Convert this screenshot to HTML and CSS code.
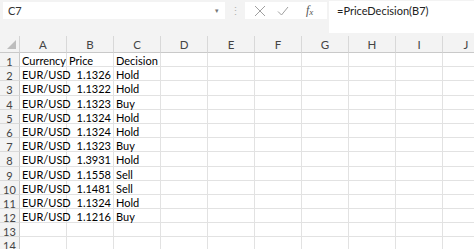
FILE: index.html
```html
<!DOCTYPE html>
<html>
<head>
    <title>Sheet</title>
    <link rel="stylesheet" href="styles.css">
</head>
<body>
    <div class="formula-area">
        <div class="name-box">
            <span class="cell-ref">C7</span>
            <span class="arrow">&#9662;</span>
        </div>
        <div class="grip">&#8942;</div>
        <div class="fn-buttons">
            <svg class="icon" width="12" height="12" viewBox="0 0 12 12"><path d="M1 1L11 11M11 1L1 11" stroke="#a0a0a0" stroke-width="1" fill="none"/></svg>
            <svg class="icon" width="12" height="12" viewBox="0 0 12 12"><path d="M1 6.5L4.5 10L11 2" stroke="#a0a0a0" stroke-width="1" fill="none"/></svg>
            <span class="fx">f<sub>x</sub></span>
        </div>
        <div class="formula-bar">=PriceDecision(B7)</div>
    </div>

    <div class="sheet">
        <div class="corner"><span class="tri"></span></div>
        <div class="col-head">A</div>
        <div class="col-head">B</div>
        <div class="col-head">C</div>
        <div class="col-head">D</div>
        <div class="col-head">E</div>
        <div class="col-head">F</div>
        <div class="col-head">G</div>
        <div class="col-head">H</div>
        <div class="col-head">I</div>
        <div class="col-head">J</div>
    </div>
    <div class="sheet" id="rows"></div>

    <script>
        // 表格数据
        const data = [
            ['Currency', 'Price', 'Decision'],
            ['EUR/USD', '1.1326', 'Hold'],
            ['EUR/USD', '1.1322', 'Hold'],
            ['EUR/USD', '1.1323', 'Buy'],
            ['EUR/USD', '1.1324', 'Hold'],
            ['EUR/USD', '1.1324', 'Hold'],
            ['EUR/USD', '1.1323', 'Buy'],
            ['EUR/USD', '1.3931', 'Hold'],
            ['EUR/USD', '1.1558', 'Sell'],
            ['EUR/USD', '1.1481', 'Sell'],
            ['EUR/USD', '1.1324', 'Hold'],
            ['EUR/USD', '1.1216', 'Buy'],
            [],
            []
        ];

        const rowsEl = document.getElementById('rows');
        data.forEach((row, i) => {
            const head = document.createElement('div');
            head.className = 'row-head';
            head.textContent = i + 1;
            rowsEl.appendChild(head);
            for (let c = 0; c < 10; c++) {
                const cell = document.createElement('div');
                cell.className = 'cell';
                const value = row[c] || '';
                if (c === 1 && i > 0) cell.className += ' num';
                cell.textContent = value;
                rowsEl.appendChild(cell);
            }
        });
    </script>
</body>
</html>
```

FILE: styles.css
```css
body {
    margin: 0;
    width: 474px;
    height: 249px;
    overflow: hidden;
    background: #ffffff;
    font-family: Lato, "Liberation Sans", sans-serif;
    font-size: 11px;
    color: #111;
}
.formula-area {
    display: flex;
    align-items: flex-start;
    height: 36px;
    background: #f3f3f3;
    padding-top: 1px;
    box-sizing: border-box;
}
.name-box {
    display: flex;
    align-items: center;
    justify-content: space-between;
    width: 222px;
    height: 17px;
    margin-left: 3px;
    margin-top: 1px;
    padding: 0 6px 0 5px;
    box-sizing: border-box;
    background: #ffffff;
    color: #333;
}
.arrow {
    font-size: 7px;
    color: #777;
}
.grip {
    width: 20px;
    text-align: center;
    color: #b5b5b5;
    font-size: 11px;
    line-height: 19px;
}
.fn-buttons {
    display: flex;
    align-items: center;
    gap: 11px;
    width: 82px;
    height: 17px;
    margin-top: 1px;
    padding-left: 9px;
    box-sizing: border-box;
    background: #ffffff;
}
.fx {
    margin-left: 6px;
    font-family: "Liberation Serif", serif;
    font-style: italic;
    font-size: 12px;
    color: #555;
}
.fx sub {
    font-size: 9px;
    vertical-align: -1px;
}
.formula-bar {
    flex: 1;
    height: 32px;
    margin-left: 2px;
    padding: 3px 0 0 8px;
    box-sizing: border-box;
    background: #ffffff;
    color: #222;
}
.sheet {
    display: grid;
    grid-template-columns: 20px repeat(10, 47px);
}
#rows {
    grid-auto-rows: 14.2px;
}
.corner,
.col-head {
    height: 17px;
    background: #f3f3f3;
    border-bottom: 1px solid #c9c9c9;
    box-sizing: border-box;
}
.corner {
    position: relative;
    border-right: 1px solid #d4d4d4;
}
.tri {
    position: absolute;
    right: 3px;
    bottom: 3px;
    width: 0;
    height: 0;
    border-left: 9px solid transparent;
    border-bottom: 9px solid #bdbdbd;
}
.col-head {
    text-align: center;
    line-height: 18px;
    color: #444;
    font-size: 11.5px;
    border-right: 1px solid #d8d8d8;
}
.row-head {
    background: #f3f3f3;
    border-right: 1px solid #c9c9c9;
    border-bottom: 1px solid #dadada;
    text-align: center;
    color: #444;
    line-height: 15px;
    padding-top: 1px;
    box-sizing: border-box;
}
.cell {
    border-right: 1px solid #e2e2e2;
    border-bottom: 1px solid #e2e2e2;
    padding: 1px 2px 0;
    line-height: 14px;
    color: #000;
    white-space: nowrap;
    overflow: visible;
    box-sizing: border-box;
}
.num {
    text-align: right;
}
```
